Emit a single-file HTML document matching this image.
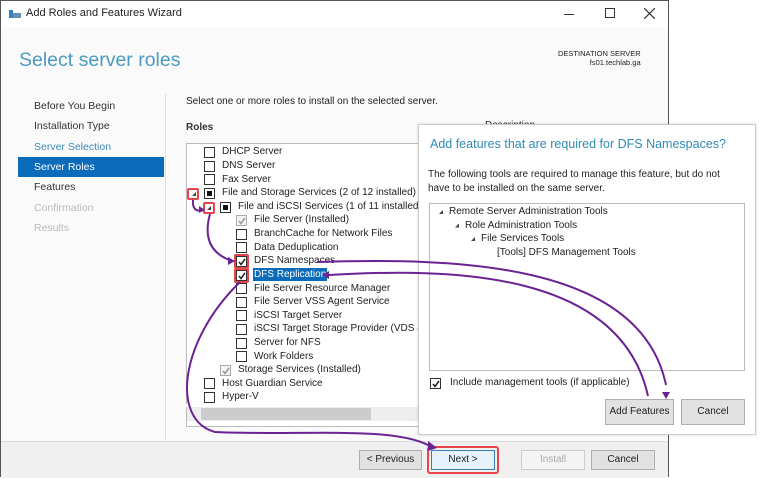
<!DOCTYPE html>
<html><head><meta charset="utf-8"><style>
*{margin:0;padding:0;box-sizing:border-box}
body{width:768px;height:477px;background:#fff;font-family:"Liberation Sans",sans-serif;font-size:10px;color:#1e1e1e;position:relative;overflow:hidden}
.a{position:absolute;white-space:nowrap}
.win{position:absolute;left:0;top:0;width:669px;height:477px;border:1px solid #555;border-bottom:none;background:#fafafa}
.cb{position:absolute;width:11px;height:11px;border:1px solid #333;background:#fff}
.cb.g{border-color:#aaa;background:#f4f4f4}
.cb svg{position:absolute;left:0;top:0}
.btn{position:absolute;border:1px solid #adadad;background:#e1e1e1;text-align:center;font-size:10px}
.nav{position:absolute;left:33px;font-size:10.5px;color:#333}
</style></head><body>
<div class="win">
 <div class="a" style="left:0;top:0;width:667px;height:26px;background:#fff"></div>
 <svg class="a" style="left:7px;top:7px" width="14" height="11"><rect x="1" y="2" width="4" height="8" fill="#3a7fc1"/><rect x="5" y="5" width="8" height="5" fill="#6a8fb0"/></svg>
 <div class="a" style="left:25px;top:6px;font-size:11px">Add Roles and Features Wizard</div>
 <div class="a" style="left:563px;top:13px;width:10px;height:1px;background:#333"></div>
 <div class="a" style="left:604px;top:7px;width:10px;height:10px;border:1px solid #333"></div>
 <svg class="a" style="left:643px;top:7px" width="11" height="11"><path d="M0 0L11 11M11 0L0 11" stroke="#333" stroke-width="1.2"/></svg>
 <div class="a" style="left:18px;top:48px;font-size:19.5px;color:#4a9bbf">Select server roles</div>
 <div class="a" style="left:557px;top:48px;font-size:7.5px;text-align:right">DESTINATION SERVER<br><span style="margin-left:30px">fs01.techlab.ga</span></div>
 <div class="a" style="left:164px;top:93px;width:1px;height:345px;background:#ddd"></div>
 <div class="nav" style="top:99px">Before You Begin</div>
 <div class="nav" style="top:119px">Installation Type</div>
 <div class="nav" style="top:140px;color:#3b8bb7">Server Selection</div>
 <div class="nav" style="top:180px">Features</div>
 <div class="nav" style="top:201px;color:#bbb">Confirmation</div>
 <div class="nav" style="top:221px;color:#bbb">Results</div>
 <div class="a" style="left:17px;top:156px;width:146px;height:20px;background:#0a6bba;color:#fff;font-size:10.5px;padding:4px 0 0 16px">Server Roles</div>
 <div class="a" style="left:185px;top:95px;font-size:10px">Select one or more roles to install on the selected server.</div>
 <div class="a" style="left:185px;top:121px;font-size:10px;font-weight:bold;color:#333">Roles</div>
 <div class="a" style="left:484px;top:119px;font-size:10px">Description</div>
 <div class="a" style="left:185px;top:142px;width:240px;height:284px;border:1px solid #bbb;background:#fff"></div>
 <div class="a" style="left:186px;top:406px;width:234px;height:14px;background:#eee"></div>
 <div class="a" style="left:200px;top:407px;width:170px;height:12px;background:#ccc"></div>
 <div class="a" style="left:0;top:440px;width:667px;height:37px;background:#f0f0f0;border-top:1px solid #ddd"></div>
 <div class="btn" style="left:358px;top:449px;width:63px;height:20px;line-height:18px">&lt; Previous</div>
 <div class="btn" style="left:430px;top:449px;width:64px;height:20px;line-height:18px;border-color:#3c7fb1;background:#e5f1fb">Next &gt;</div>
 <div class="a" style="left:426px;top:445px;width:72px;height:28px;border:2px solid #e8454a;border-radius:3px"></div>
 <div class="btn" style="left:520px;top:449px;width:64px;height:20px;line-height:18px;color:#aaa;background:#f4f4f4;border-color:#ccc">Install</div>
 <div class="btn" style="left:590px;top:449px;width:64px;height:20px;line-height:18px">Cancel</div>
</div>
<div class="cb" style="left:204px;top:147px"></div><div class="a" style="left:222px;top:146px">DHCP Server</div>
<div class="cb" style="left:204px;top:161px"></div><div class="a" style="left:222px;top:160px">DNS Server</div>
<div class="cb" style="left:204px;top:174px"></div><div class="a" style="left:222px;top:174px">Fax Server</div>
<div class="cb" style="left:204px;top:188px"></div><div class="a" style="left:207px;top:191px;width:5px;height:5px;background:#111"></div><div class="a" style="left:222px;top:187px">File and Storage Services (2 of 12 installed)</div>
<div class="cb" style="left:220px;top:202px"></div><div class="a" style="left:223px;top:205px;width:5px;height:5px;background:#111"></div><div class="a" style="left:238px;top:201px">File and iSCSI Services (1 of 11 installed)</div>
<div class="cb g" style="left:236px;top:215px"><svg width="10" height="10"><path d="M2 5L4 7.5L8 2" stroke="#999" stroke-width="1.5" fill="none"/></svg></div><div class="a" style="left:254px;top:214px">File Server (Installed)</div>
<div class="cb" style="left:236px;top:229px"></div><div class="a" style="left:254px;top:228px">BranchCache for Network Files</div>
<div class="cb" style="left:236px;top:242px"></div><div class="a" style="left:254px;top:242px">Data Deduplication</div>
<div class="cb" style="left:236px;top:256px"><svg width="10" height="10"><path d="M2 5L4 7.5L8 2" stroke="#222" stroke-width="1.5" fill="none"/></svg></div><div class="a" style="left:254px;top:255px">DFS Namespaces</div>
<div class="cb" style="left:236px;top:270px"><svg width="10" height="10"><path d="M2 5L4 7.5L8 2" stroke="#222" stroke-width="1.5" fill="none"/></svg></div><div class="a" style="left:253px;top:268px;background:#0a6bba;color:#fff;padding:1px 1px">DFS Replication</div>
<div class="cb" style="left:236px;top:283px"></div><div class="a" style="left:254px;top:283px">File Server Resource Manager</div>
<div class="cb" style="left:236px;top:297px"></div><div class="a" style="left:254px;top:296px">File Server VSS Agent Service</div>
<div class="cb" style="left:236px;top:310px"></div><div class="a" style="left:254px;top:310px">iSCSI Target Server</div>
<div class="cb" style="left:236px;top:324px"></div><div class="a" style="left:254px;top:323px">iSCSI Target Storage Provider (VDS a</div>
<div class="cb" style="left:236px;top:338px"></div><div class="a" style="left:254px;top:337px">Server for NFS</div>
<div class="cb" style="left:236px;top:351px"></div><div class="a" style="left:254px;top:351px">Work Folders</div>
<div class="cb g" style="left:220px;top:365px"><svg width="10" height="10"><path d="M2 5L4 7.5L8 2" stroke="#999" stroke-width="1.5" fill="none"/></svg></div><div class="a" style="left:238px;top:364px">Storage Services (Installed)</div>
<div class="cb" style="left:204px;top:378px"></div><div class="a" style="left:222px;top:378px">Host Guardian Service</div>
<div class="cb" style="left:204px;top:392px"></div><div class="a" style="left:222px;top:391px">Hyper-V</div>
<div class="a" style="left:186px;top:404px;width:234px;height:3px;background:#fff"></div>
<svg class="a" style="left:186px;top:186px" width="40" height="30"><path d="M6 10 L10 6 L10 10Z M21 24 L25 20 L25 24Z" fill="#444"/></svg>
<div class="a" style="left:187px;top:188px;width:12px;height:12px;border:2px solid #e8454a;border-radius:2px"></div>
<div class="a" style="left:203px;top:202px;width:12px;height:12px;border:2px solid #e8454a;border-radius:2px"></div>
<div class="a" style="left:234px;top:254px;width:15px;height:15px;border:2px solid #e8454a;border-radius:2px"></div>
<div class="a" style="left:234px;top:268px;width:15px;height:15px;border:2px solid #e8454a;border-radius:2px"></div>
<div class="a" style="left:418px;top:124px;width:338px;height:311px;background:#fff;border:1px solid #ccc;box-shadow:0 0 3px rgba(0,0,0,.15)"></div>
<div class="a" style="left:430px;top:137px;font-size:12.5px;color:#2f8bb5">Add features that are required for DFS Namespaces?</div>
<div class="a" style="left:428px;top:168px;font-size:10px;line-height:14px">The following tools are required to manage this feature, but do not<br>have to be installed on the same server.</div>
<div class="a" style="left:429px;top:203px;width:316px;height:168px;border:1px solid #bbb"></div>
<svg class="a" style="left:436px;top:206px" width="60" height="40" fill="#444"><path d="M3 8L7 4L7 8Z M19 21.5L23 17.5L23 21.5Z M35 35L39 31L39 35Z"/></svg>
<div class="a" style="left:449px;top:206px">Remote Server Administration Tools</div>
<div class="a" style="left:465px;top:220px">Role Administration Tools</div>
<div class="a" style="left:481px;top:233px">File Services Tools</div>
<div class="a" style="left:497px;top:247px">[Tools] DFS Management Tools</div>
<div class="cb" style="left:430px;top:378px"><svg width="10" height="10"><path d="M2 5L4 7.5L8 2" stroke="#222" stroke-width="1.5" fill="none"/></svg></div>
<div class="a" style="left:450px;top:377px">Include management tools (if applicable)</div>
<div class="btn" style="left:605px;top:399px;width:69px;height:26px;line-height:24px">Add Features</div>
<div class="btn" style="left:681px;top:399px;width:64px;height:26px;line-height:24px">Cancel</div>
<svg class="a" style="left:0;top:0" width="768" height="477"><g fill="none" stroke="#6b2394" stroke-width="2">
<path d="M193 200 Q192 213 203 210"/>
<path d="M210 214 Q200 250 232 261"/>
<path d="M317 262 C450 258 640 260 666 385"/>
<path d="M329 275 C450 268 620 270 648 396"/>
<path d="M240 282 C180 340 170 420 215 432 C300 436 400 425 433 448"/>
</g><g fill="#6b2394">
<path d="M199 206 L205 210 L199 213Z"/><path d="M228 257 L235 261 L228 265Z"/><path d="M662 392 L670 392 L666 399Z"/><path d="M322 275 L329 271 L329 279Z"/><path d="M428 441 L437 448 L428 451Z"/></g></svg>
</body></html>
